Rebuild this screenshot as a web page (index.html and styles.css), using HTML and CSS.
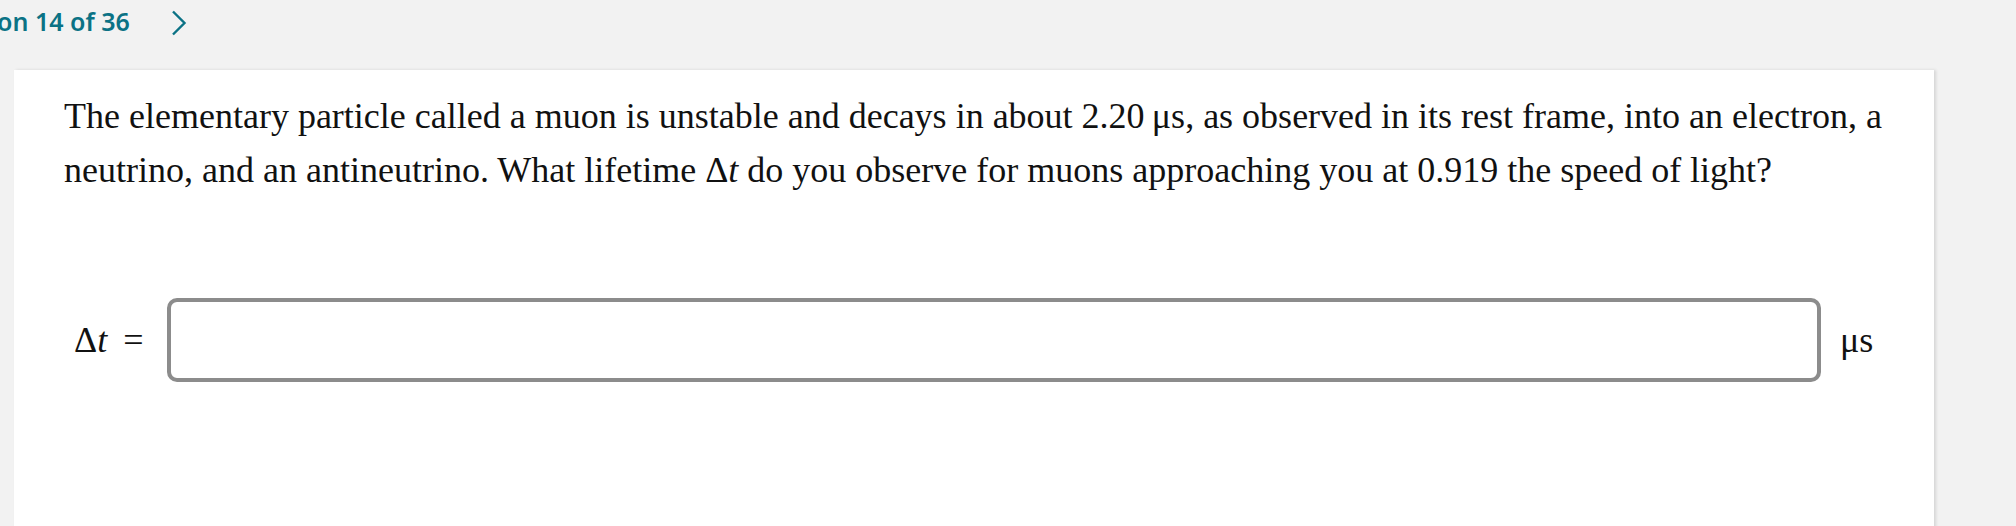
FILE: index.html
```html
<!DOCTYPE html>
<html>
<head>
<meta charset="utf-8">
<link rel="stylesheet" href="styles.css">
</head>
<body>
<div class="topbar">
  <span class="qnum">on 14 of 36</span>
  <svg class="chev" width="16" height="26" viewBox="0 0 16 26"><path d="M2 1.5 L13.5 13 L2 24.5" fill="none" stroke="#0b7285" stroke-width="2.4"/></svg>
</div>
<div class="card">
  <p class="question">The elementary particle called a muon is unstable and decays in about 2.20&#8201;μs, as observed in its rest frame, into an electron, a neutrino, and an antineutrino. What lifetime <span class="math">Δ<i>t</i></span> do you observe for muons approaching you at 0.919 the speed of light?</p>
  <div class="answer">
    <span class="label"><span class="math">Δ<i>t</i></span><span class="eq">=</span></span>
    <div class="input"></div>
    <span class="unit">μs</span>
  </div>
</div>
</body>
</html>
```
FILE: styles.css
```css
html, body {
  margin: 0;
  padding: 0;
  background: #f2f2f2;
  overflow: hidden;
}
.topbar {
  height: 70px;
  display: flex;
  align-items: flex-start;
  padding-top: 4px;
  box-sizing: border-box;
}
.qnum {
  font-family: "Noto Sans", "Open Sans", sans-serif;
  font-weight: 600;
  font-size: 25px;
  color: #0b7285;
  margin-left: -3px;
  line-height: 34px;
}
.chev {
  margin-left: 41px;
  margin-top: 6px;
}
.card {
  margin-left: 14px;
  width: 1920px;
  min-height: 600px;
  background: #fff;
  box-shadow: 2px 0 3px rgba(0,0,0,0.12);
  padding: 19px 10px 0 50px;
  box-sizing: border-box;
  font-family: "Liberation Serif", "Times New Roman", serif;
  color: #111;
}
.question {
  margin: 0;
  font-size: 36px;
  line-height: 54px;
}
.math i {
  font-style: italic;
}
.answer {
  margin-top: 101px;
  display: flex;
  align-items: center;
  font-size: 36px;
}
.label {
  display: flex;
  align-items: center;
  margin-left: 10px;
  width: 93px;
}
.eq {
  margin-left: 16px;
}
.input {
  width: 1654px;
  height: 84px;
  box-sizing: border-box;
  border: 4px solid #8c8c8c;
  border-radius: 10px;
  background: #fff;
  flex-shrink: 0;
}
.unit {
  margin-left: 19px;
}
```
